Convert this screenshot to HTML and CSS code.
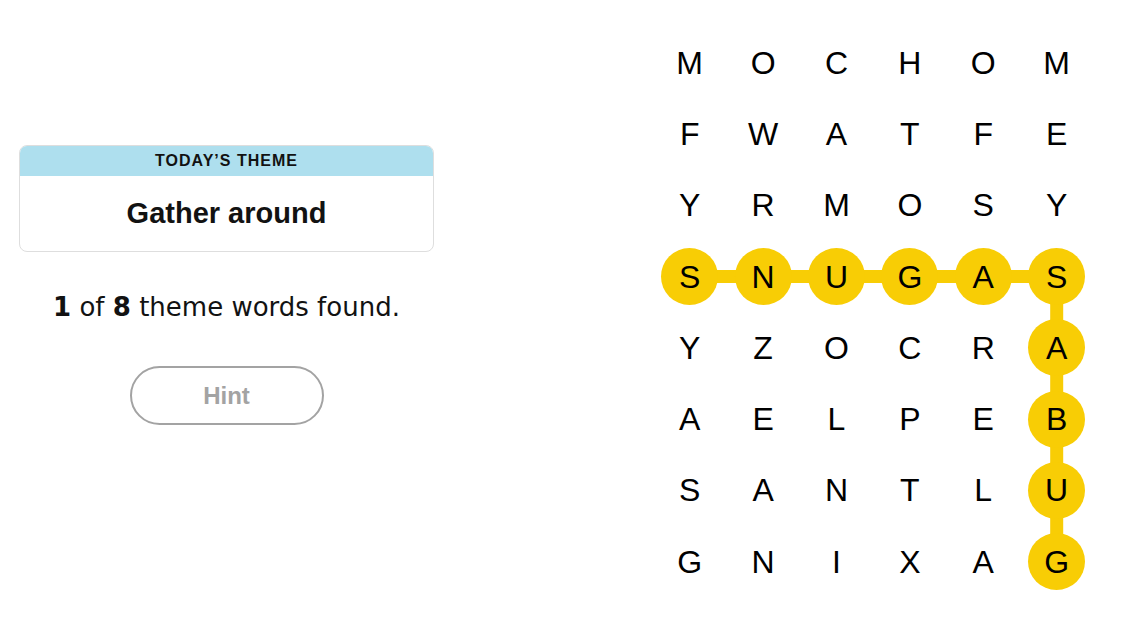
FILE: index.html
```html
<!DOCTYPE html>
<html lang="en">
<head>
<meta charset="utf-8">
<title>Strands</title>
<link rel="stylesheet" href="styles.css">
</head>
<body>
<main class="page">
  <section class="side">
    <div class="theme-card">
      <div class="theme-head">TODAY’S THEME</div>
      <div class="theme-body">Gather around</div>
    </div>
    <p class="status"><b>1</b> of <b>8</b> theme words found.</p>
    <button class="hint" type="button">Hint</button>
  </section>
  <section class="board">
    <svg class="links" width="440" height="571" viewBox="0 0 440 571" aria-hidden="true">
      <polyline points="36.7,249.5 403.7,249.5 403.7,535.2" fill="none" stroke="#f8cd05" stroke-width="13" stroke-linejoin="round"/>
    </svg>
    <div class="grid">
      <div class="cell"><span>M</span></div><div class="cell"><span>O</span></div><div class="cell"><span>C</span></div><div class="cell"><span>H</span></div><div class="cell"><span>O</span></div><div class="cell"><span>M</span></div>
      <div class="cell"><span>F</span></div><div class="cell"><span>W</span></div><div class="cell"><span>A</span></div><div class="cell"><span>T</span></div><div class="cell"><span>F</span></div><div class="cell"><span>E</span></div>
      <div class="cell"><span>Y</span></div><div class="cell"><span>R</span></div><div class="cell"><span>M</span></div><div class="cell"><span>O</span></div><div class="cell"><span>S</span></div><div class="cell"><span>Y</span></div>
      <div class="cell on"><span>S</span></div><div class="cell on"><span>N</span></div><div class="cell on"><span>U</span></div><div class="cell on"><span>G</span></div><div class="cell on"><span>A</span></div><div class="cell on"><span>S</span></div>
      <div class="cell"><span>Y</span></div><div class="cell"><span>Z</span></div><div class="cell"><span>O</span></div><div class="cell"><span>C</span></div><div class="cell"><span>R</span></div><div class="cell on"><span>A</span></div>
      <div class="cell"><span>A</span></div><div class="cell"><span>E</span></div><div class="cell"><span>L</span></div><div class="cell"><span>P</span></div><div class="cell"><span>E</span></div><div class="cell on"><span>B</span></div>
      <div class="cell"><span>S</span></div><div class="cell"><span>A</span></div><div class="cell"><span>N</span></div><div class="cell"><span>T</span></div><div class="cell"><span>L</span></div><div class="cell on"><span>U</span></div>
      <div class="cell"><span>G</span></div><div class="cell"><span>N</span></div><div class="cell"><span>I</span></div><div class="cell"><span>X</span></div><div class="cell"><span>A</span></div><div class="cell on"><span>G</span></div>
    </div>
  </section>
</main>
</body>
</html>
```

FILE: styles.css
```css
* { box-sizing: border-box; }

html, body {
  margin: 0;
  padding: 0;
  background: #ffffff;
  color: #000000;
  font-family: "Liberation Sans", Arial, sans-serif;
}

.page {
  display: flex;
  align-items: flex-start;
  padding: 27px 0 0 19px;
  gap: 219px;
}

.side {
  width: 415px;
  margin-top: 118px;
  display: flex;
  flex-direction: column;
  align-items: center;
}

.theme-card {
  width: 415px;
  border: 1px solid #dedede;
  border-radius: 8px;
  overflow: hidden;
}

.theme-head {
  height: 30px;
  background: #aedfee;
  display: flex;
  align-items: center;
  justify-content: center;
  font-size: 16px;
  font-weight: 700;
  letter-spacing: 1px;
  color: #121212;
}

.theme-body {
  height: 75px;
  display: flex;
  align-items: center;
  justify-content: center;
  font-size: 29px;
  font-weight: 700;
  color: #121212;
}

.status {
  margin: 39px 0 0;
  height: 32px;
  line-height: 32px;
  font-family: "DejaVu Sans", sans-serif;
  font-size: 26px;
  color: #121212;
}

.status b { font-weight: 700; }

.hint {
  margin-top: 43px;
  width: 194px;
  height: 59px;
  border: 2px solid #a3a3a3;
  border-radius: 30px;
  background: #ffffff;
  color: #a3a3a3;
  font-family: "Liberation Sans", Arial, sans-serif;
  font-size: 24px;
  font-weight: 700;
  padding: 0;
}

.board {
  position: relative;
  width: 440px;
  height: 571px;
}

.links {
  position: absolute;
  left: 0;
  top: 0;
}

.grid {
  position: relative;
  display: grid;
  grid-template-columns: repeat(6, 73.4px);
  grid-template-rows: repeat(8, 71.3px);
}

.cell {
  display: flex;
  align-items: center;
  justify-content: center;
}

.cell span {
  width: 57px;
  height: 57px;
  border-radius: 50%;
  display: flex;
  align-items: center;
  justify-content: center;
  font-size: 32px;
  line-height: 1;
  color: #000000;
}

.cell.on span {
  background: #f8cd05;
}
```
